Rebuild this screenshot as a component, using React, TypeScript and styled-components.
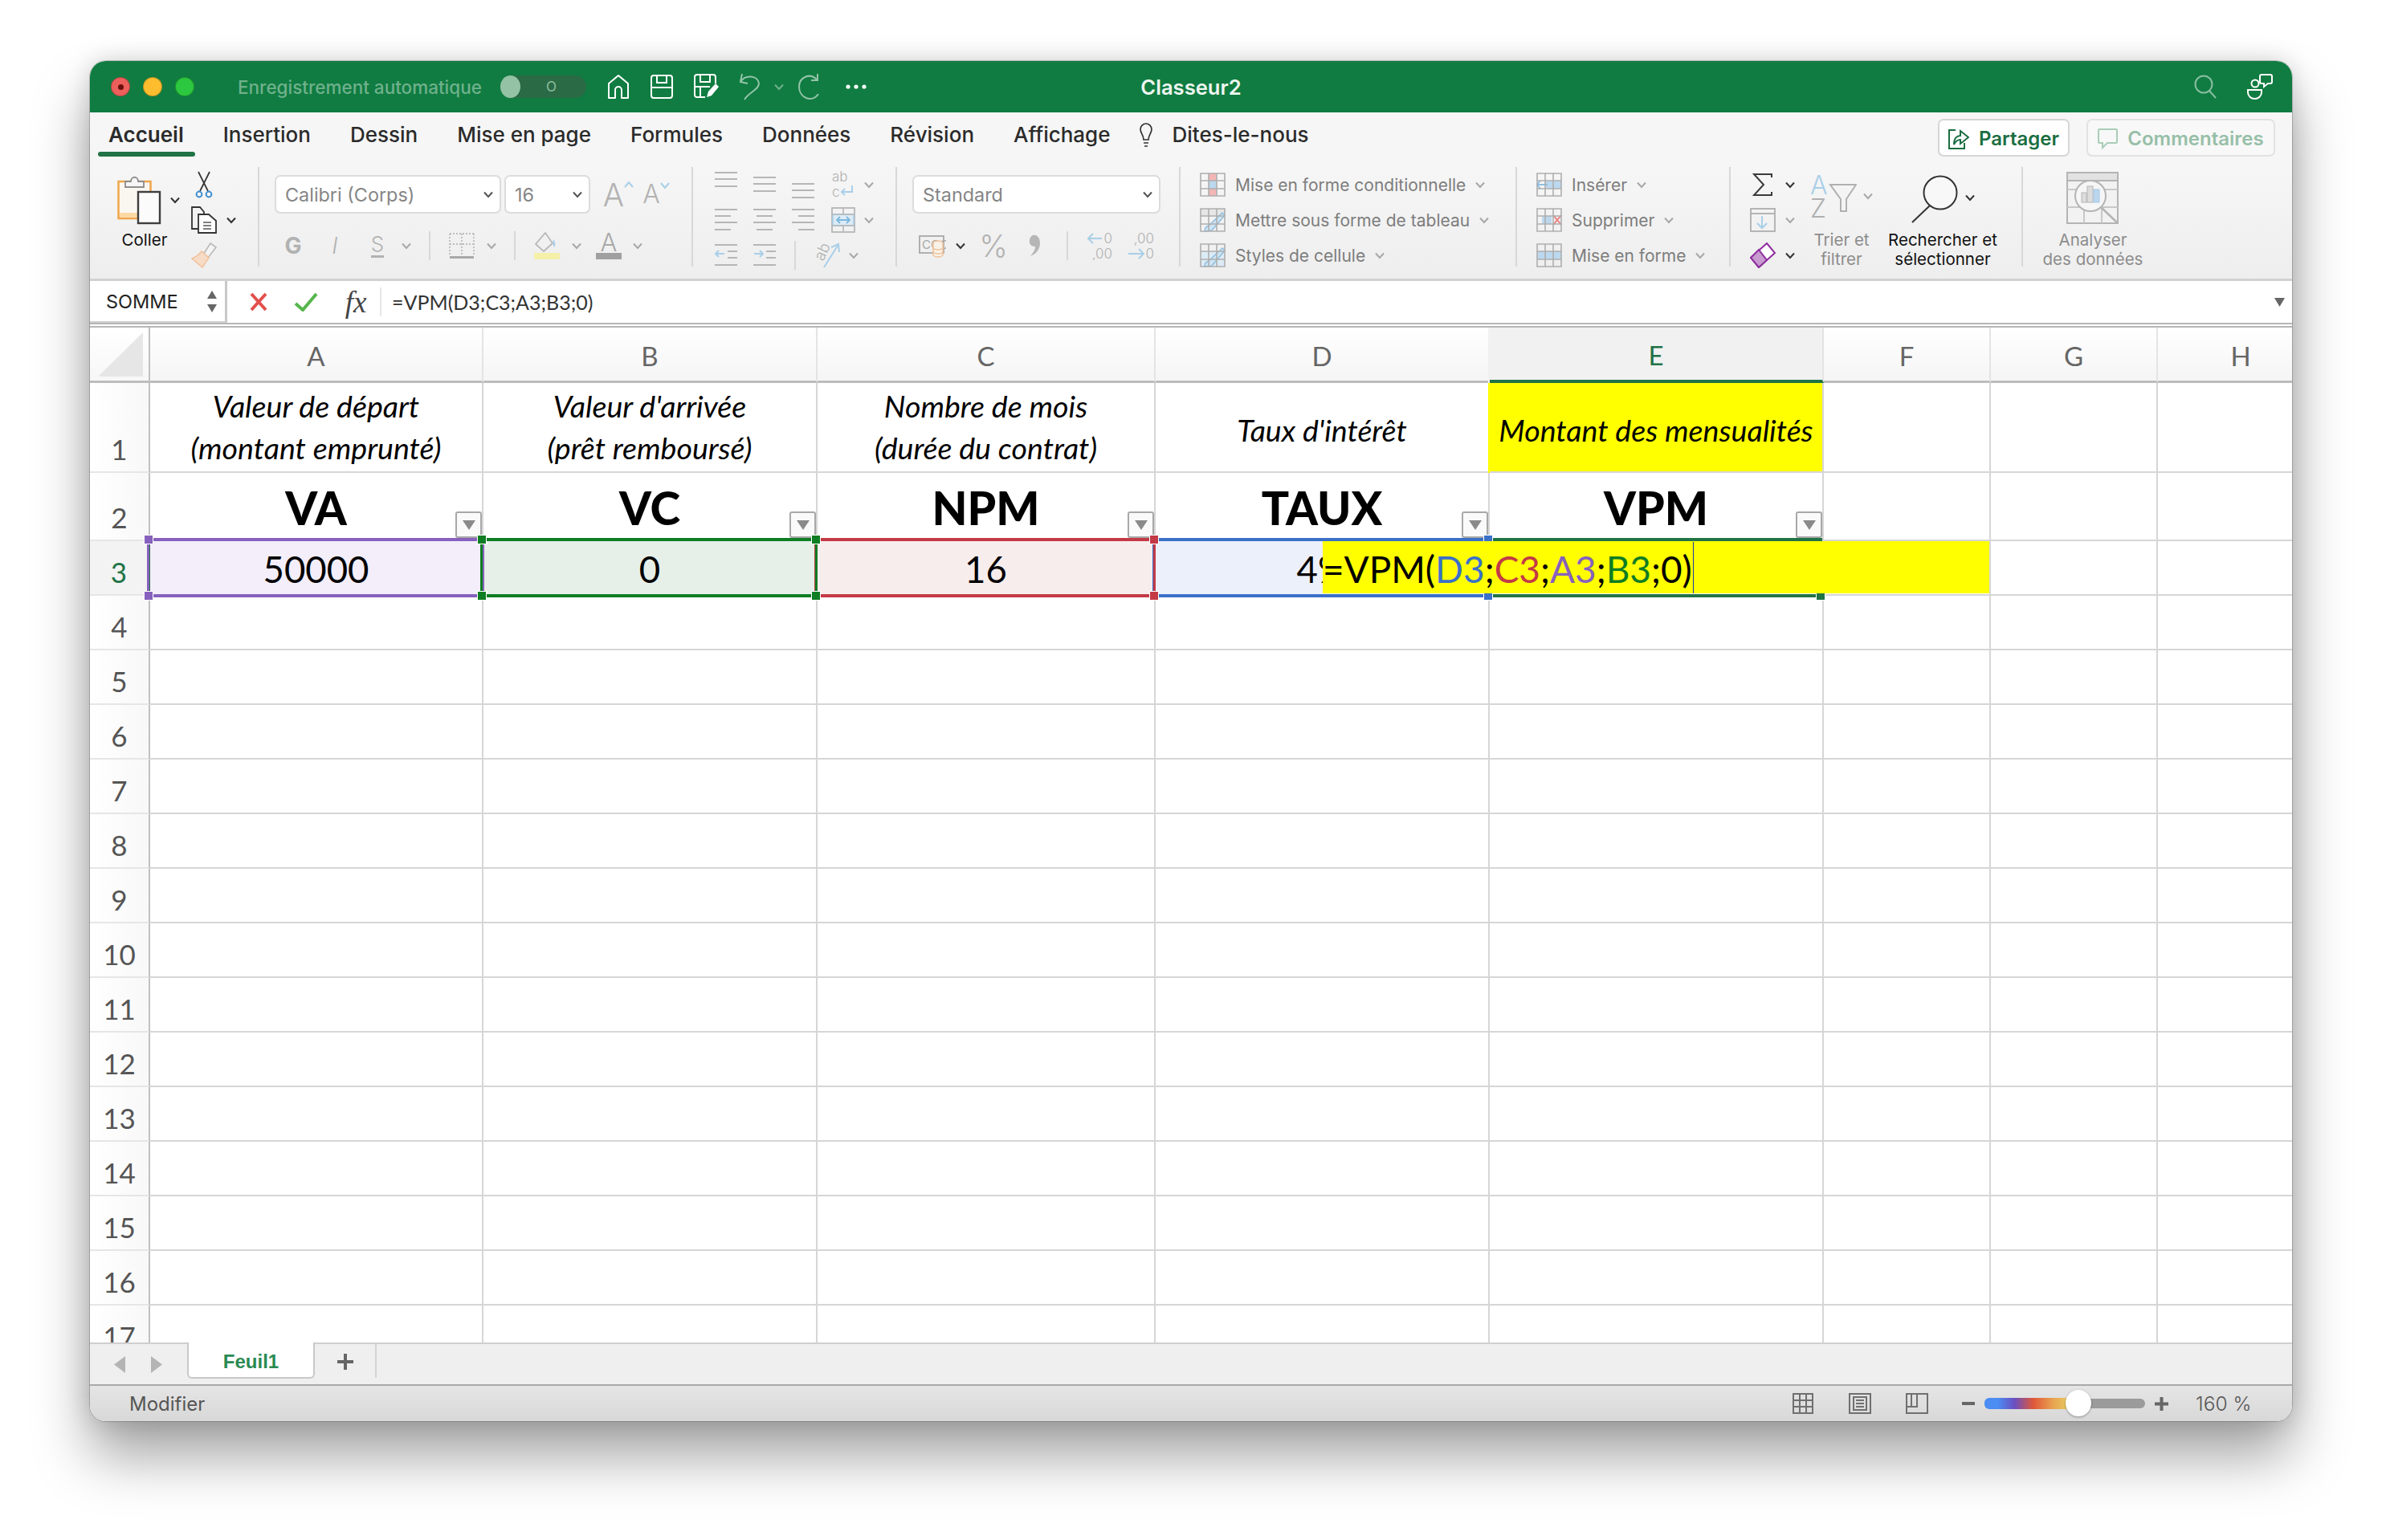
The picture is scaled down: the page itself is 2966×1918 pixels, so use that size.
import React from 'react';
import styled, { createGlobalStyle } from 'styled-components';

const UI = '"Inter", "Liberation Sans", sans-serif';
const CELL = '"Lato", "Carlito", "Open Sans", sans-serif';
const GREY = '#b2b2b2';
const BLUE = '#a9cfe8';
const DARK = '#3a3a3a';

const Global = createGlobalStyle`
  html, body { margin: 0; padding: 0; background: #fff; }
  body { font-family: ${UI}; }
  * { box-sizing: border-box; }
`;

const Page = styled.div`
  width: 2966px; height: 1918px; padding: 76px 0 0 112px; background: #fff; overflow: hidden;
`;
const Win = styled.div`
  width: 2742px; height: 1694px; border-radius: 20px; overflow: hidden; display: flex; flex-direction: column;
  background: #f4f4f4;
`;
const WinShadow = styled.div`
  width: 2742px; height: 1694px; border-radius: 20px;
  box-shadow: 0 0 0 1px rgba(0,0,0,.18), 0 44px 70px rgba(0,0,0,.36), 0 0 30px rgba(0,0,0,.16);
`;

/* ---------- title bar ---------- */
const TitleBar = styled.div`
  height: 64px; flex: none; background: #107c41; display: grid; grid-template-columns: 1fr auto 1fr; align-items: center;
`;
const TitleLeft = styled.div`display: flex; align-items: center; padding-left: 26px;`;
const TitleRight = styled.div`display: flex; align-items: center; justify-content: flex-end; padding-right: 24px; gap: 38px;`;
const Light = styled.span<{ $c: string }>`
  width: 24px; height: 24px; border-radius: 50%; background: ${p => p.$c}; margin-right: 16px; flex: none;
  border: 1px solid rgba(0,0,0,.25); display: flex; align-items: center; justify-content: center;
`;
const LightDot = styled.span`width: 7px; height: 7px; border-radius: 50%; background: #6b0f0c;`;
const AutoSave = styled.span`
  margin-left: 38px; width: 327px; font-size: 22.5px; font-weight: 500; color: #6fb18c; white-space: nowrap; flex: none;
`;
const Toggle = styled.span`
  width: 107px; height: 28px; border-radius: 14px; background: #2a6a45; flex: none; display: flex; align-items: center;
  color: #8fbda0; font-size: 17px; margin-right: 25px;
`;
const ToggleThumb = styled.span`width: 25px; height: 28px; border-radius: 50%; background: #94c2a4; margin-right: 32px;`;
const TitleIcon = styled.span<{ $w: number }>`
  width: ${p => p.$w}px; flex: none; display: flex; align-items: center; justify-content: center; height: 40px;
`;
const DocTitle = styled.div`font-size: 25.6px; font-weight: 600; color: #eef6f0;`;

/* ---------- tabs row ---------- */
const TabsRow = styled.div`
  height: 68px; flex: none; display: flex; align-items: flex-start; padding: 0 21px 0 23px; background: #f6f6f6;
`;
const TabList = styled.div`display: flex; gap: 49px; align-items: center; height: 56px;`;
const Tab = styled.span<{ $on?: boolean }>`
  position: relative; font-size: 26px; font-weight: ${p => (p.$on ? 600 : 500)}; color: #2b2b2b; white-space: nowrap; line-height: 58px; height: 58px;
  ${p => p.$on && `&::after { content: ''; position: absolute; left: -13px; right: -14px; top: 50px; height: 6px; border-radius: 3px; background: #217346; }`}
`;
const TellMe = styled.span`display: flex; align-items: center; gap: 25px; margin-left: -13px;`;
const TopButtons = styled.div`margin-left: auto; display: flex; gap: 21px; padding-top: 8px;`;
const TopButton = styled.div<{ $w: number; $off?: boolean }>`
  width: ${p => p.$w}px; height: 47px; border-radius: 7px; background: ${p => (p.$off ? '#f8f8f8' : '#fff')};
  border: 2px solid ${p => (p.$off ? '#e2e2e2' : '#d6d6d6')}; display: flex; align-items: center; justify-content: center; gap: 12px;
  padding-top: 2px; font-size: 24px; font-weight: 600; color: ${p => (p.$off ? '#97bfa8' : '#1b6e42')}; white-space: nowrap;
`;

/* ---------- ribbon ---------- */
const Ribbon = styled.div`
  height: 142px; flex: none; display: flex; align-items: flex-start; border-bottom: 3px solid #d2d2d2;
  background: linear-gradient(#f6f6f6, #eeeeee);
`;
const Group = styled.div<{ $w: number; $pad: number; $first?: boolean }>`
  width: ${p => p.$w}px; height: 124px; flex: none; padding-left: ${p => p.$pad}px; position: relative; display: flex;
  ${p => !p.$first && `border-left: 2px solid #d8d8d8;`}
`;
const PasteCol = styled.div`width: 80px; margin-right: 12px; padding-top: 10px; flex: none;`;
const PasteTop = styled.div`display: flex; align-items: center; gap: 10px; height: 62px;`;
const BigLabel = styled.div<{ $dim?: boolean }>`
  font-size: 20.5px; line-height: 24px; text-align: center; color: ${p => (p.$dim ? '#8c8c8c' : '#111')}; white-space: nowrap; flex: none;
`;
const PasteLabel = styled(BigLabel)`width: 68px; margin-top: 7px;`;
const CopyCol = styled.div`display: flex; flex-direction: column; flex: none;`;
const Stack = styled.div`display: flex; flex-direction: column; flex: none;`;
const StackRow = styled.div`height: 44px; display: flex; align-items: center; flex: none;`;
const SelectRowWrap = styled.div`display: flex; flex-direction: column; padding-top: 10px; gap: 22px;`;
const SelectRow = styled.div`display: flex; align-items: center; height: 48px;`;
const ToolRow = styled.div`display: flex; align-items: center; height: 36px;`;
const Select = styled.div<{ $w: number }>`
  width: ${p => p.$w}px; height: 48px; flex: none; background: #fff; border: 2px solid #dcdcdc; border-radius: 7px;
  display: flex; align-items: center; justify-content: space-between; padding: 0 8px 0 11px;
  font-size: 23.4px; color: #858585; margin-right: 4px;
`;
const Slot = styled.span<{ $w: number }>`
  width: ${p => p.$w}px; flex: none; display: flex; align-items: center; justify-content: center; height: 100%;
`;
const VRule = styled.span`width: 2px; height: 36px; background: #d8d8d8;`;
const Glyph = styled.span<{ $s: number; $c?: string; $b?: boolean; $i?: boolean; $u?: boolean }>`
  font-family: ${UI}; font-size: ${p => p.$s}px; line-height: 1; color: ${p => p.$c || GREY};
  font-weight: ${p => (p.$b ? 700 : 300)}; font-style: ${p => (p.$i ? 'italic' : 'normal')};
  ${p => p.$u && `border-bottom: 3px solid ${GREY}; padding-bottom: 1px;`}
`;
const FxGlyph = styled(Glyph)`font-family: "Liberation Serif", serif; font-weight: 400;`;
const Caretlet = styled.svg<{ $mb: number }>`margin-bottom: ${p => p.$mb}px;`;
const StyleRow = styled.div`height: 44px; display: flex; align-items: center; flex: none; font-size: 21px; color: #7d7d7d; white-space: nowrap;`;
const StyleLabel = styled.span`margin: 0 12px 0 12px;`;
const ToolCol = styled.div<{ $w: number; $ml?: number }>`
  width: ${p => p.$w}px; margin-left: ${p => p.$ml || 0}px; flex: none; display: flex; flex-direction: column; align-items: center;
`;
const ToolTop = styled.div<{ $pt: number }>`height: 79px; flex: none; display: flex; align-items: flex-start; gap: 8px; padding-top: ${p => p.$pt}px;`;
const ToolChev = styled.span<{ $h: number }>`height: ${p => p.$h}px; display: flex; align-items: center;`;

/* ---------- formula bar ---------- */
const FormulaBar = styled.div`
  height: 58px; flex: none; background: #fff; display: flex; align-items: stretch; border-bottom: 6px double #b6b6b6;
`;
const NameBox = styled.div`
  width: 171px; flex: none; border-right: 3px solid #c8c8c8; border-bottom: 2px solid #d0d0d0;
  display: flex; align-items: center; justify-content: space-between; padding: 0 10px 0 20px;
  font-size: 23.5px; color: #222;
`;
const Spin = styled.span`display: flex; flex-direction: column; gap: 7px;`;
const Formula = styled.div`
  flex: 1; display: flex; align-items: center; margin-left: -12px; border-left: 2px solid #e6e6e6; height: 36px; align-self: center;
  padding-left: 13px; font-family: ${CELL}; font-size: 25px; color: #333; white-space: nowrap;
`;
const FormulaEnd = styled.span`margin-left: auto; margin-right: 9px; display: flex;`;

/* ---------- sheet ---------- */
const Sheet = styled.div`
  flex: none; height: 1264px; position: relative; overflow: hidden; background: #fff; display: grid;
  grid-template-columns: 75px 415px 416px 421px 416px 416px 208px 208px 208px;
  grid-template-rows: 69px 112px 85px repeat(15, 68px); font-family: ${CELL};
`;
const Corner = styled.div`
  display: flex; align-items: flex-end; justify-content: flex-end; padding: 0 7px 5px 0;
  border-right: 2px solid #c0c0c0; border-bottom: 3px solid #bdbdbd;
  background: linear-gradient(#fff, #f7f7f7);
`;
const CornerMark = styled.div`width: 56px; height: 55px; background: #e6e6e6; clip-path: polygon(100% 0, 100% 100%, 0 100%);`;
const ColHead = styled.div<{ $on?: boolean }>`
  display: flex; align-items: center; justify-content: center; padding-top: 3px; font-size: 33px;
  color: ${p => (p.$on ? '#217346' : '#666')};
  background: ${p => (p.$on ? '#f1f1f1' : 'linear-gradient(#fff, #f5f5f5)')};
  border-right: 2px solid #e4e4e4;
  border-bottom: ${p => (p.$on ? '4px solid #217346' : '3px solid #bdbdbd')};
  ${p => p.$on && `box-shadow: -2px 0 0 #f1f1f1;`}
`;
const RowHead = styled.div<{ $on?: boolean }>`
  display: flex; align-items: flex-end; justify-content: center; padding-bottom: 8px; font-size: 35px; line-height: 40px;
  color: ${p => (p.$on ? '#217346' : '#555')};
  background: ${p => (p.$on ? '#f3f3f3' : 'linear-gradient(90deg, #fff, #f8f8f8)')};
  border-right: ${p => (p.$on ? '3px solid #217346' : '2px solid #c0c0c0')};
  border-bottom: 2px solid #e6e6e6;
`;
const Cell = styled.div<{ $bg?: string; $flush?: boolean }>`
  position: relative; display: flex; align-items: center; justify-content: center; text-align: center;
  background: ${p => p.$bg || '#fff'}; border-right: 2px solid #d6d6d6; border-bottom: 2px solid #d6d6d6; color: #000;
  ${p => p.$flush && `box-shadow: -2px 0 0 ${p.$bg};`}
`;
const Note = styled.div`font-size: 37.6px; font-style: italic; line-height: 52px; white-space: nowrap;`;
const OneNote = styled(Note)`padding-top: 8px;`;
const Head = styled.div`font-size: 57px; font-weight: 900; line-height: 1; padding-top: 4px;`;
const Value = styled.div`font-size: 45.5px; line-height: 1; padding-top: 4px;`;
const FilterBtn = styled.div`
  position: absolute; right: 0; bottom: 2px; width: 33px; height: 33px; background: #fafafa; border: 2px solid #a8a8a8; border-radius: 3px;
  display: flex; align-items: center; justify-content: center;
`;
const FilterTri = styled.span`width: 0; height: 0; border-left: 8px solid transparent; border-right: 8px solid transparent; border-top: 12px solid #8a8a8a;`;

const Range = styled.div<{ $l: number; $w: number; $c: string }>`
  position: absolute; left: ${p => p.$l}px; width: ${p => p.$w}px; top: 262px; height: 74px;
  border: solid ${p => p.$c}; border-width: 4px 3px;
`;
const Handle = styled.span<{ $c: string; $x: 'l' | 'r'; $y: 't' | 'b' }>`
  position: absolute; width: 10px; height: 10px; background: ${p => p.$c}; box-shadow: 0 0 0 1px #fff;
  ${p => (p.$x === 'l' ? 'left: -6px;' : 'right: -6px;')}
  ${p => (p.$y === 't' ? 'top: -7px;' : 'bottom: -7px;')}
`;
const Editor = styled.div`
  position: absolute; left: 1535px; top: 266px; width: 830px; height: 65px; background: #ffff00; z-index: 5;
  display: flex; align-items: center; font-size: 45.9px; color: #000; white-space: nowrap; padding-top: 3px;
`;
const Ref = styled.span<{ $c: string }>`color: ${p => p.$c};`;
const Caret = styled.span`width: 1px; height: 64px; background: #1a3aa0; margin: -3px 0 0 1px;`;

/* ---------- tabs + status ---------- */
const SheetTabs = styled.div`
  height: 54px; flex: none; display: flex; background: #efefef; border-top: 2px solid #cfcfcf; border-bottom: 2px solid #a9a9a9; align-items: flex-start;
`;
const TabArrows = styled.div`width: 121px; height: 50px; display: flex; align-items: center; gap: 32px; padding-left: 30px;`;
const SheetTab = styled.div`
  width: 159px; height: 45px; margin-top: -2px; background: #fff; border: 2px solid #c8c8c8; border-top: none; border-radius: 0 0 6px 6px;
  font-family: "Liberation Sans", sans-serif; font-weight: 700; font-size: 24px; color: #2a8a52; padding-top: 4px;
  display: flex; align-items: center; justify-content: center;
`;
const AddSheet = styled.div`
  width: 77px; height: 42px; display: flex; align-items: center; justify-content: center; border-right: 2px solid #d4d4d4; padding-top: 2px;
`;
const Status = styled.div`
  height: 44px; flex: none; display: flex; align-items: center; padding-left: 49px;
  background: linear-gradient(#e5e5e5, #d8d8d8); font-size: 24px; color: #555;
`;
const StatusRight = styled.div`margin-left: auto; display: flex; align-items: center; padding-right: 49px; height: 100%;`;
const Zoom = styled.span`width: 200px; height: 12px; position: relative; border-radius: 6px; background: #9b9b9b; flex: none; margin: 0 12px;`;
const ZoomFill = styled.span`
  position: absolute; left: 0; top: -1px; width: 117px; height: 14px; border-radius: 6px 0 0 6px;
  background: linear-gradient(90deg, #4b8df2 0, #4b8df2 14%, #6a4fc0 32%, #e0583a 52%, #e8a050 72%, #e8c860 88%, #9ab860 100%);
`;
const ZoomThumb = styled.span`
  position: absolute; left: 101px; top: -11px; width: 32px; height: 33px; border-radius: 50%; background: #fff; box-shadow: 0 1px 3px rgba(0,0,0,.35);
`;
const ZoomPct = styled.span`margin-left: 34px; font-size: 24.5px; font-weight: 300; white-space: nowrap; width: 71px;`;

/* ---------- icons ---------- */
const Chev: React.FC<{ c?: string }> = ({ c = '#a8a8a8' }) => (
  <svg width="12" height="9" viewBox="0 0 12 9"><path d="M1 1.5 L6 7 L11 1.5" fill="none" stroke={c} strokeWidth="2" /></svg>
);
const DChev = () => <Chev c="#333" />;

const W = { fill: 'none', stroke: '#fff', strokeWidth: 2 };
const Home = () => <svg width="30" height="32" viewBox="0 0 30 32"><path {...W} d="M3 30 V12 L15 2 L27 12 V30 H19 V20 a4 4 0 0 0 -8 0 V30 Z" strokeLinejoin="round" /></svg>;
const Save = () => <svg width="28" height="30" viewBox="0 0 28 30"><path {...W} d="M4 1 H24 a3 3 0 0 1 3 3 V26 a3 3 0 0 1 -3 3 H4 a3 3 0 0 1 -3 -3 V4 a3 3 0 0 1 3 -3 Z M8 1 V10 H20 V1 M1 16 H27" /></svg>;
const SaveAs = () => (
  <svg width="32" height="32" viewBox="0 0 32 32">
    <path {...W} d="M14 29 H4 a3 3 0 0 1 -3 -3 V4 a3 3 0 0 1 3 -3 H24 a3 3 0 0 1 3 3 V12 M8 1 V10 H20 V1 M1 16 H20 M8 16 V29" />
    <path d="M16 29 L18 22 L27 12 L31 16 L22 27 Z" fill="#fff" />
  </svg>
);
const Undo = () => <svg width="28" height="34" viewBox="0 0 28 34" opacity=".55"><path {...W} d="M4 1 L2 11 L11 13 M2 11 C8 1 24 3 25 13 C25 21 12 24 7 33" /></svg>;
const Redo = () => <svg width="36" height="34" viewBox="0 0 36 34" opacity=".55"><path {...W} d="M26 1 V9 H18 M26 9 C16 -2 3 6 3 17 C3 32 20 37 27 26" /></svg>;
const Dots = () => <svg width="26" height="6" viewBox="0 0 26 6"><circle cx="3" cy="3" r="2.6" fill="#fff" /><circle cx="13" cy="3" r="2.6" fill="#fff" /><circle cx="23" cy="3" r="2.6" fill="#fff" /></svg>;
const SearchIc = () => <svg width="28" height="30" viewBox="0 0 28 30" opacity=".5"><circle cx="12" cy="12" r="10.5" {...W} /><path {...W} d="M19 20 L27 29" /></svg>;
const People = () => (
  <svg width="32" height="32" viewBox="0 0 32 32">
    <circle cx="10" cy="12" r="4.5" {...W} /><path {...W} d="M1 20 H18 V23 a8.5 8 0 0 1 -17 0 Z" />
    <path {...W} d="M18 1 H29 a2 2 0 0 1 2 2 V10 a2 2 0 0 1 -2 2 H26 L21 16 V12 H18 a2 2 0 0 1 -2 -2 V3 a2 2 0 0 1 2 -2 Z" />
  </svg>
);
const Bulb = () => <svg width="16" height="30" viewBox="0 0 16 30"><path d="M5 21 C5 15 1 13 1 8 a7 7 0 0 1 14 0 C15 13 11 15 11 21 Z M5 25 H11 M6 29 H10" fill="none" stroke="#333" strokeWidth="1.7" /></svg>;
const ShareIc = () => (
  <svg width="26" height="26" viewBox="0 0 26 26"><path d="M9 2 H1 V25 H20 V18" fill="none" stroke="#1b6e42" strokeWidth="2" /><path d="M7 20 C7 12 11 9 15 9 V3 L25 11 L15 19 V14 C11 14 9 16 7 20 Z" fill="none" stroke="#1b6e42" strokeWidth="2" /></svg>
);
const CommentIc = () => <svg width="25" height="26" viewBox="0 0 25 26"><path d="M2 1 H23 a1 1 0 0 1 1 1 V17 a1 1 0 0 1 -1 1 H12 L6 24 V18 H2 a1 1 0 0 1 -1 -1 V2 a1 1 0 0 1 1 -1 Z" fill="none" stroke="#a9cdb8" strokeWidth="2" /></svg>;

const Clipboard = () => (
  <svg width="56" height="62" viewBox="0 0 56 62">
    <rect x="1.5" y="8" width="40" height="46" fill="#faf7f0" stroke="#f0a64a" strokeWidth="2.5" />
    <rect x="3" y="47" width="26" height="6" fill="#fbd9a4" />
    <path d="M10 15 V8 H17 C17 1 26 1 26 8 H33 V15 Z" fill="#f6f6f6" stroke="#8d8d8d" strokeWidth="1.8" />
    <rect x="26" y="21" width="27" height="39" fill="#fbfbfb" stroke="#3e3e3e" strokeWidth="2.4" />
  </svg>
);
const Scissors = () => (
  <svg width="24" height="34" viewBox="0 0 24 34">
    <path d="M5 1 L17 25 M19 1 L7 25" stroke="#333" strokeWidth="1.7" fill="none" />
    <circle cx="6" cy="29" r="3.4" fill="none" stroke="#3f8fd0" strokeWidth="2" /><circle cx="18" cy="29" r="3.4" fill="none" stroke="#3f8fd0" strokeWidth="2" />
  </svg>
);
const CopyIc = () => (
  <svg width="32" height="34" viewBox="0 0 32 34">
    <path d="M9 28 H1 V1 H11 L16 7 V10" fill="none" stroke="#333" strokeWidth="1.8" />
    <path d="M9 10 H22 L31 18 V33 H9 Z" fill="#fff" stroke="#333" strokeWidth="1.8" /><path d="M15 20 H25 M15 24 H25 M15 28 H25" stroke="#555" strokeWidth="1.6" />
  </svg>
);
const Brush = () => (
  <svg width="32" height="32" viewBox="0 0 32 32">
    <path d="M24 1 L31 6 L21 19 L15 15 Z" fill="#f4f4f4" stroke="#b8b8b8" strokeWidth="1.6" />
    <path d="M13 11 L22 19 L14 31 L1 20 C6 18 10 15 13 11 Z" fill="#f6dcc6" stroke="#f2c29d" strokeWidth="1.6" />
  </svg>
);
const Borders = () => (
  <svg width="32" height="34" viewBox="0 0 32 34">
    <path d="M1 2 H31 M1 2 V28 M31 2 V28 M16 2 V28 M1 15 H31" stroke="#bdbdbd" strokeWidth="1.8" strokeDasharray="2 2" fill="none" />
    <rect x="1" y="30" width="30" height="3" fill="#a8a8a8" />
  </svg>
);
const FillIc = () => (
  <svg width="34" height="34" viewBox="0 0 34 34">
    <path d="M15 1 L3 15 L13 24 L24 14 Z" fill="none" stroke="#b8b8b8" strokeWidth="1.8" /><path d="M25 9 C28 13 28 17 26 19 C24 15 24 12 25 9 Z" fill={BLUE} />
    <rect x="1" y="26" width="32" height="8" fill="#f5f0a8" />
  </svg>
);
const AColor = () => (
  <svg width="32" height="34" viewBox="0 0 32 34"><text x="16" y="24" textAnchor="middle" fontFamily={UI} fontSize="31" fontWeight="300" fill="#a8a8a8">A</text><rect x="0" y="26" width="32" height="8" fill="#a0a0a0" /></svg>
);
const Lines: React.FC<{ l: [number, number, number][]; children?: React.ReactNode }> = ({ l, children }) => (
  <svg width="28" height="36" viewBox="0 0 28 36">
    {l.map(([x, y, w], i) => <rect key={i} x={x} y={y} width={w} height="2" fill="#b6b6b6" />)}
    {children}
  </svg>
);
const AbWrap = () => (
  <svg width="30" height="36" viewBox="0 0 30 36">
    <text x="1" y="14" fontFamily={UI} fontSize="17" fontWeight="300" fill="#b0b0b0">ab</text>
    <text x="1" y="33" fontFamily={UI} fontSize="17" fontWeight="300" fill="#b0b0b0">c</text>
    <path d="M26 19 V27 H13 M17 23 L13 27 L17 31" fill="none" stroke={BLUE} strokeWidth="2" />
  </svg>
);
const Merge = () => (
  <svg width="30" height="32" viewBox="0 0 30 32">
    <rect x="1" y="1" width="28" height="30" fill="none" stroke="#b6b6b6" strokeWidth="1.8" />
    <rect x="2" y="9" width="26" height="14" fill="#dcebf6" stroke={BLUE} strokeWidth="1.6" />
    <path d="M1 9 H29 M1 23 H29 M15 1 V9 M15 23 V31" stroke="#b6b6b6" strokeWidth="1.6" />
    <path d="M7 16 H23 M11 12 L7 16 L11 20 M19 12 L23 16 L19 20" fill="none" stroke="#7db7de" strokeWidth="1.8" />
  </svg>
);
const Orient = () => (
  <svg width="36" height="34" viewBox="0 0 36 34">
    <text x="0" y="0" fontFamily={UI} fontSize="19" fontWeight="300" fill="#b0b0b0" transform="translate(13 25) rotate(-65)">ab</text>
    <path d="M14 32 L31 5 M23 7 L32 3 L33 13" fill="none" stroke={BLUE} strokeWidth="2" />
  </svg>
);
const Currency = () => (
  <svg width="34" height="30" viewBox="0 0 34 30">
    <rect x="1" y="3" width="30" height="21" fill="none" stroke="#a8a8a8" strokeWidth="1.8" />
    <text x="4" y="19" fontFamily={UI} fontSize="15" fill="#a8a8a8">CCC</text>
    <ellipse cx="24" cy="12" rx="6" ry="3" fill="#f8f2e8" stroke="#efc29b" strokeWidth="1.6" />
    <path d="M18 12 V26 a6 3 0 0 0 12 0 V12 M18 17 a6 3 0 0 0 12 0 M18 22 a6 3 0 0 0 12 0" fill="#f8f2e8" stroke="#efc29b" strokeWidth="1.6" />
  </svg>
);
const Comma = () => <svg width="16" height="28" viewBox="0 0 16 28"><path d="M6 1 C12 0 15 5 15 11 C15 19 9 25 3 27 C7 22 9 19 9 15 C4 15 1 12 2 7 C2 4 4 2 6 1 Z" fill="#b6b6b6" /></svg>;
const DecMore = () => (
  <svg width="34" height="36" viewBox="0 0 34 36">
    <text x="33" y="15" textAnchor="end" fontFamily={UI} fontSize="17" fontWeight="300" fill="#b0b0b0">0</text>
    <text x="33" y="34" textAnchor="end" fontFamily={UI} fontSize="17" fontWeight="300" fill="#b0b0b0">,00</text>
    <path d="M20 9 H3 M9 3 L3 9 L9 15" fill="none" stroke={BLUE} strokeWidth="2" />
  </svg>
);
const DecLess = () => (
  <svg width="34" height="36" viewBox="0 0 34 36">
    <text x="33" y="15" textAnchor="end" fontFamily={UI} fontSize="17" fontWeight="300" fill="#b0b0b0">,00</text>
    <text x="33" y="34" textAnchor="end" fontFamily={UI} fontSize="17" fontWeight="300" fill="#b0b0b0">0</text>
    <path d="M1 28 H20 M14 22 L20 28 L14 34" fill="none" stroke={BLUE} strokeWidth="2" />
  </svg>
);
const GridBase: React.FC<{ children?: React.ReactNode }> = ({ children }) => (
  <svg width="32" height="30" viewBox="0 0 32 30">
    {children}
    <path d="M1 1 H31 V29 H1 Z M11 1 V29 M21 1 V29 M1 10 H31 M1 20 H31" fill="none" stroke="#aeaeae" strokeWidth="1.6" />
  </svg>
);
const BrushBlue = () => <path d="M28 6 L31 9 L15 28 L6 29 C6 25 8 23 11 22 Z" fill="#cfe3f2" stroke="#8fbfe0" strokeWidth="1.5" />;
const Sigma = () => <svg width="26" height="30" viewBox="0 0 26 30"><path d="M24 6 V2 H2 L14 15 L2 28 H24 V24" fill="none" stroke={DARK} strokeWidth="2" /></svg>;
const FillDown = () => (
  <svg width="32" height="30" viewBox="0 0 32 30"><rect x="1" y="1" width="30" height="28" fill="none" stroke="#aeaeae" strokeWidth="1.8" /><path d="M1 7 H31" stroke="#aeaeae" strokeWidth="1.8" /><path d="M15 10 V25 M9 19 L15 25 L21 19" fill="none" stroke={BLUE} strokeWidth="2" /></svg>
);
const Eraser = () => (
  <svg width="32" height="32" viewBox="0 0 32 32"><path d="M21 1 L31 13 L11 31 L1 19 Z" fill="#fff" stroke="#8e2f9e" strokeWidth="2" /><path d="M11 9 L21 22 L11 31 L1 19 Z" fill="#c79ad0" stroke="#8e2f9e" strokeWidth="2" /></svg>
);
const SortIc = () => (
  <svg width="58" height="56" viewBox="0 0 58 56">
    <text x="0" y="26" fontFamily={UI} fontSize="32" fontWeight="300" fill={BLUE}>A</text>
    <text x="0" y="55" fontFamily={UI} fontSize="32" fontWeight="300" fill="#b0b0b0">Z</text>
    <path d="M25 14 H57 L45 32 V47 H38 V32 Z" fill="none" stroke="#b0b0b0" strokeWidth="2" />
  </svg>
);
const Loupe = () => <svg width="60" height="60" viewBox="0 0 60 60"><circle cx="37" cy="22" r="20.5" fill="#f8f8f8" stroke="#333" strokeWidth="2" /><path d="M24 38 L2 59" stroke="#333" strokeWidth="2" /></svg>;
const Analyse = () => (
  <svg width="66" height="66" viewBox="0 0 66 66">
    <rect x="1" y="1" width="63" height="63" fill="#f2f2f2" stroke="#b4b4b4" strokeWidth="2" />
    <rect x="1" y="1" width="63" height="10" fill="#e2e2e2" stroke="#b4b4b4" strokeWidth="2" />
    <path d="M1 22 H64 M1 44 H64 M22 44 V64 M44 44 V64" stroke="#c8c8c8" strokeWidth="2" />
    <circle cx="30" cy="30" r="19" fill="#f6f6f6" stroke="#b4b4b4" strokeWidth="2" /><path d="M43 44 L64 64" stroke="#b4b4b4" strokeWidth="2.5" />
    <rect x="19" y="26" width="6" height="12" fill="#ddd" stroke="#b4b4b4" /><rect x="26" y="18" width="7" height="20" fill="#ddd" stroke="#b4b4b4" /><rect x="34" y="22" width="7" height="16" fill="#bcd6ee" stroke="#a4c6e4" />
  </svg>
);
const XIc = () => <svg width="24" height="24" viewBox="0 0 24 24"><path d="M3 2 L21 22 M21 2 L3 22" stroke="#e2504c" strokeWidth="4" fill="none" /></svg>;
const CheckIc = () => <svg width="30" height="24" viewBox="0 0 30 24"><path d="M2 14 L11 22 L28 2" stroke="#56b64c" strokeWidth="4" fill="none" /></svg>;
const Tri: React.FC<{ d: 'u' | 'd' | 'l' | 'r'; c: string; w: number; h: number }> = ({ d, c, w, h }) => {
  const pts = { u: `0,${h} ${w},${h} ${w / 2},0`, d: `0,0 ${w},0 ${w / 2},${h}`, l: `${w},0 ${w},${h} 0,${h / 2}`, r: `0,0 0,${h} ${w},${h / 2}` }[d];
  return <svg width={w} height={h} viewBox={`0 0 ${w} ${h}`}><polygon points={pts} fill={c} /></svg>;
};
const S = { fill: 'none', stroke: '#707070', strokeWidth: 2 };
const ViewNormal = () => <svg width="26" height="26" viewBox="0 0 26 26"><path {...S} d="M1 1 H25 V25 H1 Z M9 1 V25 M17 1 V25 M1 9 H25 M1 17 H25" /></svg>;
const ViewPage = () => <svg width="28" height="26" viewBox="0 0 28 26"><path {...S} d="M1 1 H27 V25 H1 Z M6 5 H22 V21 H6 Z M9 9 H19 M9 13 H19 M9 17 H19" /></svg>;
const ViewBreak = () => <svg width="28" height="26" viewBox="0 0 28 26"><path {...S} d="M1 1 H27 V25 H1 Z M1 17 H14 V1 M7 1 V17" /></svg>;
const PlusIc: React.FC<{ s: number; t: number; c: string }> = ({ s, t, c }) => (
  <svg width={s} height={s} viewBox={`0 0 ${s} ${s}`}><rect x="0" y={(s - t) / 2} width={s} height={t} fill={c} /><rect x={(s - t) / 2} y="0" width={t} height={s} fill={c} /></svg>
);
const MinusIc = () => <svg width="16" height="4" viewBox="0 0 16 4"><rect width="16" height="4" fill="#666" /></svg>;

/* ---------- data ---------- */
const COLS = ['A', 'B', 'C', 'D', 'E', 'F', 'G', 'H'];
const ROWS = Array.from({ length: 17 }, (_, i) => i + 1);
const TABS = ['Insertion', 'Dessin', 'Mise en page', 'Formules', 'Données', 'Révision', 'Affichage'];
const two = (a: string, b: string) => <Note>{a}<br />{b}</Note>;
const CONTENT: Record<string, React.ReactNode> = {
  A1: two('Valeur de départ', '(montant emprunté)'),
  B1: two("Valeur d'arrivée", '(prêt remboursé)'),
  C1: two('Nombre de mois', '(durée du contrat)'),
  D1: <OneNote>Taux d'intérêt</OneNote>,
  E1: <OneNote>Montant des mensualités</OneNote>,
  A2: <Head>VA</Head>, B2: <Head>VC</Head>, C2: <Head>NPM</Head>, D2: <Head>TAUX</Head>, E2: <Head>VPM</Head>,
  A3: <Value>50000</Value>, B3: <Value>0</Value>, C3: <Value>16</Value>, D3: <Value>4%</Value>,
};
const FILLS: Record<string, string> = { E1: '#ffff00', A3: '#f3eefa', B3: '#e6f0e8', C3: '#f8eded', D3: '#ecf0fa' };
const RANGES = [
  { l: 1739, w: 418, c: '#217346', k: 'E' },
  { l: 1323, w: 420, c: '#3a70c8', k: 'D' },
  { l: 902, w: 425, c: '#c33a46', k: 'C' },
  { l: 71, w: 420, c: '#8661bd', k: 'A' },
  { l: 486, w: 420, c: '#0f7d23', k: 'B' },
];

export default function App() {
  return (
    <Page>
      <Global />
      <WinShadow>
        <Win>
          <TitleBar>
            <TitleLeft>
              <Light $c="#ec5f5a"><LightDot /></Light>
              <Light $c="#fdbd2e" />
              <Light $c="#2cc83f" />
              <AutoSave>Enregistrement automatique</AutoSave>
              <Toggle><ToggleThumb />O</Toggle>
              <TitleIcon $w={30}><Home /></TitleIcon>
              <TitleIcon $w={25} />
              <TitleIcon $w={28}><Save /></TitleIcon>
              <TitleIcon $w={26} />
              <TitleIcon $w={32}><SaveAs /></TitleIcon>
              <TitleIcon $w={24} />
              <TitleIcon $w={28}><Undo /></TitleIcon>
              <TitleIcon $w={44}><Chev c="#6fb18c" /></TitleIcon>
              <TitleIcon $w={36}><Redo /></TitleIcon>
              <TitleIcon $w={25} />
              <TitleIcon $w={26}><Dots /></TitleIcon>
            </TitleLeft>
            <DocTitle>Classeur2</DocTitle>
            <TitleRight><SearchIc /><People /></TitleRight>
          </TitleBar>

          <TabsRow>
            <TabList>
              <Tab $on>Accueil</Tab>
              {TABS.map(t => <Tab key={t}>{t}</Tab>)}
              <TellMe><Bulb /><Tab>Dites-le-nous</Tab></TellMe>
            </TabList>
            <TopButtons>
              <TopButton $w={164}><ShareIc />Partager</TopButton>
              <TopButton $w={235} $off><CommentIc />Commentaires</TopButton>
            </TopButtons>
          </TabsRow>

          <Ribbon>
            <Group $w={209} $pad={34} $first>
              <PasteCol>
                <PasteTop><Clipboard /><DChev /></PasteTop>
                <PasteLabel>Coller</PasteLabel>
              </PasteCol>
              <CopyCol>
                <StackRow><Slot $w={32}><Scissors /></Slot></StackRow>
                <StackRow><Slot $w={32}><CopyIc /></Slot><Slot $w={36}><DChev /></Slot></StackRow>
                <StackRow><Slot $w={32}><Brush /></Slot></StackRow>
              </CopyCol>
            </Group>

            <Group $w={540} $pad={19}>
              <SelectRowWrap>
                <SelectRow>
                  <Select $w={282}>Calibri (Corps)<Chev c="#555" /></Select>
                  <Select $w={107}>16<Chev c="#555" /></Select>
                  <Slot $w={6} />
                  <Slot $w={50}><Glyph $s={39}>A</Glyph><Caretlet $mb={24} width="12" height="10" viewBox="0 0 12 10"><path d="M1 8 L6 2 L11 8" fill="none" stroke={BLUE} strokeWidth="2" /></Caretlet></Slot>
                  <Slot $w={44}><Glyph $s={32}>A</Glyph><Caretlet $mb={22} width="12" height="10" viewBox="0 0 12 10"><path d="M1 2 L6 8 L11 2" fill="none" stroke={BLUE} strokeWidth="2" /></Caretlet></Slot>
                </SelectRow>
                <ToolRow>
                  <Slot $w={46}><Glyph $s={28} $b>G</Glyph></Slot>
                  <Slot $w={58}><Glyph $s={28} $i>I</Glyph></Slot>
                  <Slot $w={48}><Glyph $s={26} $u>S</Glyph></Slot>
                  <Slot $w={24}><Chev /></Slot>
                  <Slot $w={34}><VRule /></Slot>
                  <Slot $w={46}><Borders /></Slot>
                  <Slot $w={28}><Chev /></Slot>
                  <Slot $w={30}><VRule /></Slot>
                  <Slot $w={50}><FillIc /></Slot>
                  <Slot $w={24}><Chev /></Slot>
                  <Slot $w={56}><AColor /></Slot>
                  <Slot $w={16}><Chev /></Slot>
                </ToolRow>
              </SelectRowWrap>
            </Group>

            <Group $w={254} $pad={17}>
              <Stack>
                <StackRow>
                  <Slot $w={48}><Lines l={[[0, 2, 28], [0, 10, 28], [0, 19, 28]]} /></Slot>
                  <Slot $w={48}><Lines l={[[0, 8, 28], [0, 16, 28], [0, 25, 28]]} /></Slot>
                  <Slot $w={48}><Lines l={[[0, 16, 28], [0, 24, 28], [0, 33, 28]]} /></Slot>
                  <Slot $w={52}><AbWrap /></Slot>
                  <Slot $w={12}><Chev /></Slot>
                </StackRow>
                <StackRow>
                  <Slot $w={48}><Lines l={[[0, 4, 28], [0, 12, 20], [0, 20, 28], [0, 29, 20]]} /></Slot>
                  <Slot $w={48}><Lines l={[[0, 4, 28], [4, 12, 20], [0, 20, 28], [4, 29, 20]]} /></Slot>
                  <Slot $w={48}><Lines l={[[0, 4, 28], [8, 12, 20], [0, 20, 28], [8, 29, 20]]} /></Slot>
                  <Slot $w={52}><Merge /></Slot>
                  <Slot $w={12}><Chev /></Slot>
                </StackRow>
                <StackRow>
                  <Slot $w={48}><Lines l={[[0, 4, 28], [16, 12, 12], [16, 20, 12], [0, 29, 28]]}><path d="M12 16 H1 M5 12 L1 16 L5 20" fill="none" stroke={BLUE} strokeWidth="2" /></Lines></Slot>
                  <Slot $w={48}><Lines l={[[0, 4, 28], [16, 12, 12], [16, 20, 12], [0, 29, 28]]}><path d="M1 16 H12 M8 12 L12 16 L8 20" fill="none" stroke={BLUE} strokeWidth="2" /></Lines></Slot>
                  <Slot $w={28}><VRule /></Slot>
                  <Slot $w={52}><Orient /></Slot>
                  <Slot $w={14}><Chev /></Slot>
                </StackRow>
              </Stack>
            </Group>

            <Group $w={353} $pad={19}>
              <SelectRowWrap>
                <SelectRow><Select $w={309}>Standard<Chev c="#555" /></Select></SelectRow>
                <ToolRow>
                  <Slot $w={50}><Currency /></Slot>
                  <Slot $w={20}><DChev /></Slot>
                  <Slot $w={62}><Glyph $s={38}>%</Glyph></Slot>
                  <Slot $w={40}><Comma /></Slot>
                  <Slot $w={42}><VRule /></Slot>
                  <Slot $w={38}><DecMore /></Slot>
                  <Slot $w={66}><DecLess /></Slot>
                </ToolRow>
              </SelectRowWrap>
            </Group>

            <Group $w={419} $pad={24}>
              <Stack>
                <StyleRow>
                  <GridBase><rect x="11" y="1" width="10" height="9" fill="#f3b6b6" /><rect x="11" y="20" width="10" height="9" fill="#f3b6b6" /><rect x="11" y="10" width="10" height="10" fill="#bcd8ee" /></GridBase>
                  <StyleLabel>Mise en forme conditionnelle</StyleLabel><Chev />
                </StyleRow>
                <StyleRow>
                  <GridBase><rect x="1" y="1" width="30" height="9" fill="#e6e6e6" /><BrushBlue /></GridBase>
                  <StyleLabel>Mettre sous forme de tableau</StyleLabel><Chev />
                </StyleRow>
                <StyleRow>
                  <GridBase><rect x="1" y="10" width="30" height="19" fill="#dcebf6" /><BrushBlue /></GridBase>
                  <StyleLabel>Styles de cellule</StyleLabel><Chev />
                </StyleRow>
              </Stack>
            </Group>

            <Group $w={266} $pad={24}>
              <Stack>
                <StyleRow>
                  <GridBase><rect x="11" y="10" width="20" height="10" fill="#bcd8ee" /><path d="M14 15 H1 M5 10 L1 15 L5 20" fill="none" stroke="#8fbfe0" strokeWidth="2" /></GridBase>
                  <StyleLabel>Insérer</StyleLabel><Chev />
                </StyleRow>
                <StyleRow>
                  <GridBase><rect x="7" y="10" width="12" height="10" fill="#bcd8ee" /><path d="M21 9 L31 21 M31 9 L21 21" stroke="#ea8a8a" strokeWidth="2" /></GridBase>
                  <StyleLabel>Supprimer</StyleLabel><Chev />
                </StyleRow>
                <StyleRow>
                  <GridBase><rect x="1" y="10" width="30" height="10" fill="#bcd8ee" /></GridBase>
                  <StyleLabel>Mise en forme</StyleLabel><Chev />
                </StyleRow>
              </Stack>
            </Group>

            <Group $w={364} $pad={24}>
              <Stack>
                <StackRow><Slot $w={32}><Sigma /></Slot><Slot $w={36}><DChev /></Slot></StackRow>
                <StackRow><Slot $w={32}><FillDown /></Slot><Slot $w={36}><Chev /></Slot></StackRow>
                <StackRow><Slot $w={32}><Eraser /></Slot><Slot $w={36}><DChev /></Slot></StackRow>
              </Stack>
              <ToolCol $w={86} $ml={3}>
                <ToolTop $pt={8}><SortIc /><ToolChev $h={56}><Chev /></ToolChev></ToolTop>
                <BigLabel $dim>Trier et<br />filtrer</BigLabel>
              </ToolCol>
              <ToolCol $w={142} $ml={12}>
                <ToolTop $pt={10}><Loupe /><ToolChev $h={56}><DChev /></ToolChev></ToolTop>
                <BigLabel>Rechercher et<br />sélectionner</BigLabel>
              </ToolCol>
            </Group>

            <Group $w={176} $pad={0}>
              <ToolCol $w={174}>
                <ToolTop $pt={6}><Analyse /></ToolTop>
                <BigLabel $dim>Analyser<br />des données</BigLabel>
              </ToolCol>
            </Group>
          </Ribbon>

          <FormulaBar>
            <NameBox>SOMME<Spin><Tri d="u" c="#666" w={12} h={10} /><Tri d="d" c="#666" w={12} h={10} /></Spin></NameBox>
            <Slot $w={78}><XIc /></Slot>
            <Slot $w={40}><CheckIc /></Slot>
            <Slot $w={84}><FxGlyph $s={37} $c="#444" $i>fx</FxGlyph></Slot>
            <Formula>=VPM(D3;C3;A3;B3;0)<FormulaEnd><Tri d="d" c="#666" w={13} h={11} /></FormulaEnd></Formula>
          </FormulaBar>

          <Sheet>
            <Corner><CornerMark /></Corner>
            {COLS.map(c => <ColHead key={c} $on={c === 'E'}>{c}</ColHead>)}
            {ROWS.map(r => (
              <React.Fragment key={r}>
                <RowHead $on={r === 3}>{r}</RowHead>
                {COLS.map(c => {
                  const id = `${c}${r}`;
                  return (
                    <Cell key={id} $bg={FILLS[id]} $flush={id === 'E1'}>
                      {CONTENT[id]}
                      {r === 2 && c <= 'E' && <FilterBtn><FilterTri /></FilterBtn>}
                    </Cell>
                  );
                })}
              </React.Fragment>
            ))}
            {RANGES.map(g => (
              <Range key={g.k} $l={g.l} $w={g.w} $c={g.c}>
                {g.k === 'E'
                  ? <Handle $c={g.c} $x="r" $y="b" />
                  : (
                    <>
                      <Handle $c={g.c} $x="l" $y="t" /><Handle $c={g.c} $x="r" $y="t" />
                      <Handle $c={g.c} $x="l" $y="b" /><Handle $c={g.c} $x="r" $y="b" />
                    </>
                  )}
              </Range>
            ))}
            <Editor>
              =VPM(<Ref $c="#3a70c8">D3</Ref>;<Ref $c="#c33a46">C3</Ref>;<Ref $c="#8661bd">A3</Ref>;<Ref $c="#0f7d23">B3</Ref>;0)<Caret />
            </Editor>
          </Sheet>

          <SheetTabs>
            <TabArrows><Tri d="l" c="#b4b4b4" w={14} h={21} /><Tri d="r" c="#b4b4b4" w={14} h={21} /></TabArrows>
            <SheetTab>Feuil1</SheetTab>
            <AddSheet><PlusIc s={20} t={4} c="#666" /></AddSheet>
          </SheetTabs>

          <Status>
            Modifier
            <StatusRight>
              <ViewNormal />
              <Slot $w={44} />
              <ViewPage />
              <Slot $w={43} />
              <ViewBreak />
              <Slot $w={42} />
              <MinusIc />
              <Zoom><ZoomFill /><ZoomThumb /></Zoom>
              <PlusIc s={17} t={4} c="#666" />
              <ZoomPct>160 %</ZoomPct>
            </StatusRight>
          </Status>
        </Win>
      </WinShadow>
    </Page>
  );
}
